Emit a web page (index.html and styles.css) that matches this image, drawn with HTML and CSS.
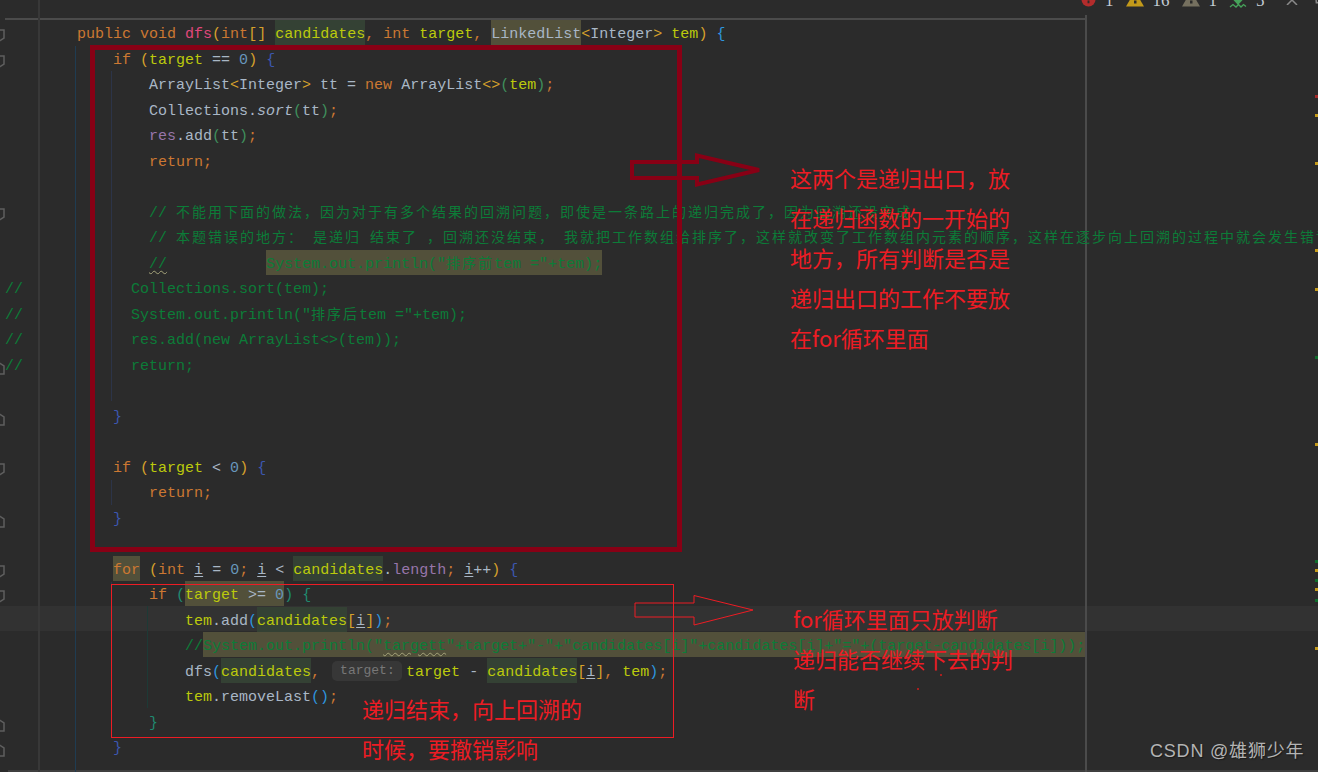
FILE: index.html
```html
<!DOCTYPE html>
<html lang="zh-CN">
<head>
<meta charset="utf-8">
<title>dfs</title>
<link rel="stylesheet" href="styles.css">
</head>
<body>
<main class="shot">
  <div class="current"></div>
  <div class="guide g-right"></div>
  <div class="guide g-gutter"></div>
  <div class="guide g-method"></div>
  <div class="guide g-if1"></div>
  <div class="guide g-if2"></div>
  <div class="guide g-for"></div>
  <div class="guide g-if3"></div>

  <header class="status">
    <svg class="st-i" viewBox="0 0 16 16"><circle cx="8" cy="8" r="7.5" fill="#b32c2c"/><rect x="7" y="9" width="2" height="3" fill="#2b2b2b"/></svg><span class="st-n">1</span>
    <svg class="st-i st-t" viewBox="0 0 18 16"><path d="M9 0 18 15.5H0Z" fill="#c39a1a"/><rect x="8" y="9.5" width="2.5" height="3" fill="#2b2b2b"/></svg><span class="st-n">16</span>
    <svg class="st-i st-t" viewBox="0 0 18 16"><path d="M9 0 18 15.5H0Z" fill="#75705f"/><rect x="8" y="9.5" width="2.5" height="3" fill="#2b2b2b"/></svg><span class="st-n">1</span>
    <svg class="st-i st-w" viewBox="0 0 18 16"><path d="M9 12 3.5 6H14.5Z" fill="#46a35a"/><path d="M1 14 4 11.5 7 14 9.5 11.5 12 14 14.5 11.5 17 13.5" fill="none" stroke="#46a35a" stroke-width="1.3"/></svg><span class="st-n">5</span>
    <svg class="st-c" viewBox="0 0 14 8"><path d="M2 8 7 3 12 8" fill="none" stroke="#8a8a8a" stroke-width="1.5"/></svg>
    <svg class="st-c st-c2" viewBox="0 0 14 8"><path d="M2 0 7 5 12 0" fill="none" stroke="#8a8a8a" stroke-width="1.5"/></svg>
  </header>
  <div class="rule"></div>

  <section class="code">
    <div class="ln"><span class="g"><svg class="fold" viewBox="0 0 5 14"><path d="M-6 1H4V9L-2 13" /></svg></span><span class="t">        <span class="k">public</span> <span class="k">void</span> <span class="fn">dfs</span><span class="y">(</span><span class="k">int</span><span class="y">[]</span> <span class="hl hg v">candidates</span><span class="k">,</span> <span class="k">int</span> <span class="v">target</span><span class="k">,</span> <span class="hl hy">LinkedList</span><span class="y">&lt;</span>Integer<span class="y">&gt;</span> <span class="v">tem</span><span class="y">)</span> <span class="b1">{</span></span></div>
    <div class="ln"><span class="g"><svg class="fold" viewBox="0 0 5 14"><path d="M-6 1H4V9L-2 13" /></svg></span><span class="t">            <span class="k">if</span> <span class="y">(</span><span class="v">target</span> == <span class="n">0</span><span class="y">)</span> <span class="b2">{</span></span></div>
    <div class="ln"><span class="g"></span><span class="t">                ArrayList<span class="y">&lt;</span>Integer<span class="y">&gt;</span> tt = <span class="k">new</span> ArrayList<span class="y">&lt;&gt;</span><span class="gp">(</span><span class="v">tem</span><span class="gp">)</span><span class="k">;</span></span></div>
    <div class="ln"><span class="g"></span><span class="t">                Collections.<em>sort</em><span class="gp">(</span>tt<span class="gp">)</span><span class="k">;</span></span></div>
    <div class="ln"><span class="g"></span><span class="t">                <span class="p">res</span>.add<span class="gp">(</span>tt<span class="gp">)</span><span class="k">;</span></span></div>
    <div class="ln"><span class="g"></span><span class="t">                <span class="k">return;</span></span></div>
    <div class="ln"></div>
    <div class="ln"><span class="g"><svg class="fold" viewBox="0 0 5 14"><path d="M-6 1H4V9L-2 13" /></svg></span><span class="t c">                // <span class="zh">不能用下面的做法，因为对于有多个结果的回溯问题，即使是一条路上的递归完成了，因为回溯还没完成</span></span></div>
    <div class="ln"><span class="g"></span><span class="t c">                // <span class="zh">本题错误的地方：</span> <span class="zh">是递归</span> <span class="zh">结束了</span> <span class="zh">，回溯还没结束，</span> <span class="zh">我就把工作数组给排序了，这样就改变了工作数组内元素的顺序，这样在逐步向上回溯的过程中就会发生错误</span></span></div>
    <div class="ln"><span class="g"></span><span class="t c">                <span class="wavy">//</span>           <span class="hl hy">System.out.println("<span class="zh">排序前</span>tem ="+tem);</span></span></div>
    <div class="ln"><span class="g"></span><span class="t c">//            Collections.sort(tem);</span></div>
    <div class="ln"><span class="g"></span><span class="t c">//            System.out.println("<span class="zh">排序后</span>tem ="+tem);</span></div>
    <div class="ln"><span class="g"></span><span class="t c">//            res.add(new ArrayList&lt;&gt;(tem));</span></div>
    <div class="ln"><span class="g"><svg class="fold" viewBox="0 0 5 14"><path d="M-6 13H4V5L-2 1" /></svg></span><span class="t c">//            return;</span></div>
    <div class="ln"></div>
    <div class="ln"><span class="g"><svg class="fold" viewBox="0 0 5 14"><path d="M-6 13H4V5L-2 1" /></svg></span><span class="t">            <span class="b2">}</span></span></div>
    <div class="ln"></div>
    <div class="ln"><span class="g"><svg class="fold" viewBox="0 0 5 14"><path d="M-6 1H4V9L-2 13" /></svg></span><span class="t">            <span class="k">if</span> <span class="y">(</span><span class="v">target</span> &lt; <span class="n">0</span><span class="y">)</span> <span class="b2">{</span></span></div>
    <div class="ln"><span class="g"></span><span class="t">                <span class="k">return;</span></span></div>
    <div class="ln"><span class="g"><svg class="fold" viewBox="0 0 5 14"><path d="M-6 13H4V5L-2 1" /></svg></span><span class="t">            <span class="b2">}</span></span></div>
    <div class="ln"></div>
    <div class="ln"><span class="g"><svg class="fold" viewBox="0 0 5 14"><path d="M-6 1H4V9L-2 13" /></svg></span><span class="t">            <span class="hl hy k">for</span> <span class="y">(</span><span class="k">int</span> <u class="v0">i</u> = <span class="n">0</span><span class="k">;</span> <u class="v0">i</u> &lt; <span class="hl hg v">candidates</span>.<span class="p">length</span><span class="k">;</span> <u class="v0">i</u>++<span class="y">)</span> <span class="b2">{</span></span></div>
    <div class="ln"><span class="g"><svg class="fold" viewBox="0 0 5 14"><path d="M-6 1H4V9L-2 13" /></svg></span><span class="t">                <span class="k">if</span> <span class="te">(</span><span class="hl hy"><span class="v">target</span> &gt;= <span class="n">0</span></span><span class="te">) {</span></span></div>
    <div class="ln"><span class="g"></span><span class="t">                    <span class="v">tem</span>.add<span class="b1">(</span><span class="hl hg v">candidates</span><span class="y">[</span><u class="v0">i</u><span class="y">]</span><span class="b1">)</span><span class="k">;</span></span></div>
    <div class="ln"><span class="g"></span><span class="t c">                    //<span class="hl hy">System.out.println("<span class="wavy">targett</span>"+target+"-"+"candidates[i]"+candidates[i]+"="+(target-candidates[i]));</span></span></div>
    <div class="ln"><span class="g"></span><span class="t">                    dfs<span class="b1">(</span><span class="hl hg v">candidates</span><span class="k">,</span> <span class="hint">target:</span><span class="v">target</span> - <span class="hl hg v">candidates</span><span class="y">[</span><u class="v0">i</u><span class="y">]</span><span class="k">,</span> <span class="v">tem</span><span class="b1">)</span><span class="k">;</span></span></div>
    <div class="ln"><span class="g"></span><span class="t">                    <span class="v">tem</span>.removeLast<span class="b1">()</span><span class="k">;</span></span></div>
    <div class="ln"><span class="g"><svg class="fold" viewBox="0 0 5 14"><path d="M-6 13H4V5L-2 1" /></svg></span><span class="t">                <span class="te">}</span></span></div>
    <div class="ln"><span class="g"><svg class="fold" viewBox="0 0 5 14"><path d="M-6 13H4V5L-2 1" /></svg></span><span class="t">            <span class="b2">}</span></span></div>
  </section>
  <div class="rule-bottom"></div>

  <div class="box-thick"></div>
  <div class="box-thin"></div>
  <svg class="arrows" viewBox="0 0 1318 772">
    <path class="a-thick" d="M632 162H697V155.500L759 170 697 184.500V178H632Z"/>
    <path class="a-thin" d="M635 603H694V595.500L753 610 694 625V617H635Z"/>
  </svg>

  <p class="note n1">这两个是递归出口，放<br>在递归函数的一开始的<br>地方，所有判断是否是<br>递归出口的工作不要放<br>在for循环里面</p>
  <p class="note n2">for循环里面只放判断<br>递归能否继续下去的判<br>断</p>
  <p class="note n3">递归结束，向上回溯的<br>时候，要撤销影响</p>
  <span class="speck s1"></span><span class="speck s2"></span>

  <aside class="stripe">
    <i class="m mr m96"></i><i class="m my m115"></i><i class="m my m163"></i><i class="m my m250"></i><i class="m my m289"></i><i class="m mg m357"></i><i class="m my m443"></i><i class="m mg m561"></i><i class="m my m570"></i><i class="m mg m580"></i><i class="m my m589"></i><i class="m mg m600"></i><i class="m my m648"></i>
  </aside>

  <div class="mark">CSDN @雄狮少年</div>
</main>
</body>
</html>
```

FILE: styles.css
```css
* { box-sizing: border-box; }
html, body { margin: 0; padding: 0; background: #2b2b2b; }

.shot {
  position: relative;
  width: 1318px;
  height: 772px;
  overflow: hidden;
  background: #2b2b2b;
  display: flex;
  flex-direction: column;
  font-family: "Liberation Mono", "Noto Sans CJK SC", monospace;
  font-size: 15px;
  color: #a9b7c6;
}

/* current line + indent guides sit under the code */
.current { position: absolute; left: 0; right: 0; top: 606px; height: 25px; background: #323232; }
.guide { position: absolute; width: 1px; }
.g-right { left: 1085px; top: 15px; bottom: 0; width: 2px; background: #4b4b4b; }
.g-gutter { left: 38px; top: 0; bottom: 0; width: 2px; background: #383838; }
.g-method { left: 75px; top: 46px; bottom: 0; background: #1f3c52; }
.g-if1 { left: 111px; top: 71px; height: 330px; background: #2c3448; }
.g-if2 { left: 111px; top: 480px; height: 25px; background: #2c3448; }
.g-for { left: 111px; top: 582px; height: 153px; background: #2c3448; }
.g-if3 { left: 147px; top: 606px; height: 102px; background: #1d3a36; }

/* cropped inspection widget at the very top */
.status {
  position: relative;
  height: 10px;
  flex: none;
  display: flex;
  align-items: flex-end;
  overflow: hidden;
  padding-left: 1081px;
  font-family: "Liberation Serif", serif;
  color: #c4ccd4;
}
.st-i { flex: none; width: 15px; height: 15px; margin-bottom: 3px; }
.st-t { width: 18px; margin-left: 12px; height: 16px; margin-bottom: 3px; }
.st-w { width: 18px; margin-left: 12px; height: 16px; margin-bottom: 1px; }
.st-n { flex: none; line-height: 18px; margin-left: 9px; margin-bottom: 0; font-size: 17px; }
.st-c { flex: none; width: 14px; height: 8px; margin-left: 20px; margin-bottom: 5px; }
.st-c2 { margin-left: 11px; margin-bottom: 4px; transform: rotate(40deg); }

.rule { flex: none; height: 2px; margin: 8px 232px 0 5px; background: #4b4b4b; }

.code { position: relative; flex: none; }
.ln { display: flex; height: 25.5px; line-height: 29.5px; white-space: pre; }
.g { flex: none; width: 5px; height: 25.5px; overflow: hidden; }
.t { flex: none; }
.fold { display: block; width: 5px; height: 14px; margin-top: 9px; overflow: hidden; fill: none; stroke: #5f5f5f; stroke-width: 1.5; }

.k { color: #cc7832; }
.fn { color: #e0487c; }
.y { color: #d6a12b; }
.v { color: #bcca0c; }
.n { color: #6897bb; }
.p { color: #9876aa; }
.gp { color: #3f8f5c; }
.b1 { color: #2e95de; }
.b2 { color: #3c57b0; }
.te { color: #1f8a70; }
.c { color: #0c7c38; }
u.v0 { color: #a9b7c6; text-underline-offset: 2px; }
em { font-style: italic; }
.zh { font-family: "Noto Sans CJK SC", sans-serif; font-size: 14px; letter-spacing: 2px; line-height: 1; }
.hl { display: inline-block; height: 25px; line-height: 29.5px; vertical-align: top; }
.hg { background: #344134; }
.hy { background: #52503a; }
.wavy { text-decoration: underline wavy #a5a37a 1px; text-underline-offset: 2px; }
.hint {
  display: inline-block;
  width: 70px;
  height: 20px;
  margin: 0 4px 0 3px;
  padding-left: 8px;
  vertical-align: 2px;
  border-radius: 5px;
  background: #373737;
  color: #787878;
  font-size: 13px;
  line-height: 19px;
}

.rule-bottom { flex: none; height: 2px; margin: auto 0 0 8px; background: #3f3f3f; }

/* annotations painted over the editor */
.box-thick { position: absolute; left: 90px; top: 45px; width: 592px; height: 507px; border: 5px solid #880015; }
.box-thin { position: absolute; left: 111px; top: 584px; width: 563px; height: 154px; border: 1px solid #ed1c24; }
.arrows { position: absolute; left: 0; top: 0; width: 1318px; height: 772px; pointer-events: none; }
.a-thick { fill: none; stroke: #880015; stroke-width: 4; }
.a-thin { fill: none; stroke: #ed1c24; stroke-width: 1; }

.note {
  position: absolute;
  margin: 0;
  font-family: "Noto Sans CJK SC", sans-serif;
  font-size: 22px;
  line-height: 40px;
  color: #ed1c24;
  white-space: nowrap;
}
.n1 { left: 790px; top: 157px; }
.n2 { left: 793px; top: 598px; }
.n3 { left: 362px; top: 688px; }
.speck { position: absolute; width: 2px; height: 2px; background: #a8201f; }
.s1 { left: 940px; top: 674px; }
.s2 { left: 917px; top: 688px; }

.stripe { position: absolute; right: 0; top: 0; width: 3px; height: 772px; }
.m { position: absolute; left: 0; width: 3px; height: 3px; }
.mr { background: #a52a2a; }
.my { background: #c39a1a; }
.mg { background: #0f6e2b; }
.m96 { top: 95px; } .m115 { top: 114px; } .m163 { top: 162px; } .m250 { top: 249px; }
.m289 { top: 288px; } .m357 { top: 356px; } .m443 { top: 443px; } .m561 { top: 560px; }
.m570 { top: 569px; } .m580 { top: 579px; } .m589 { top: 588px; } .m600 { top: 599px; } .m648 { top: 647px; }

.mark {
  position: absolute;
  left: 1150px;
  top: 739px;
  font-family: "Liberation Sans", "Noto Sans CJK SC", sans-serif;
  font-size: 18px;
  letter-spacing: 0.8px;
  line-height: 24px;
  color: #b4b4b4;
  text-shadow: 1px 1px 1px #1a1a1a;
  white-space: nowrap;
}
```
